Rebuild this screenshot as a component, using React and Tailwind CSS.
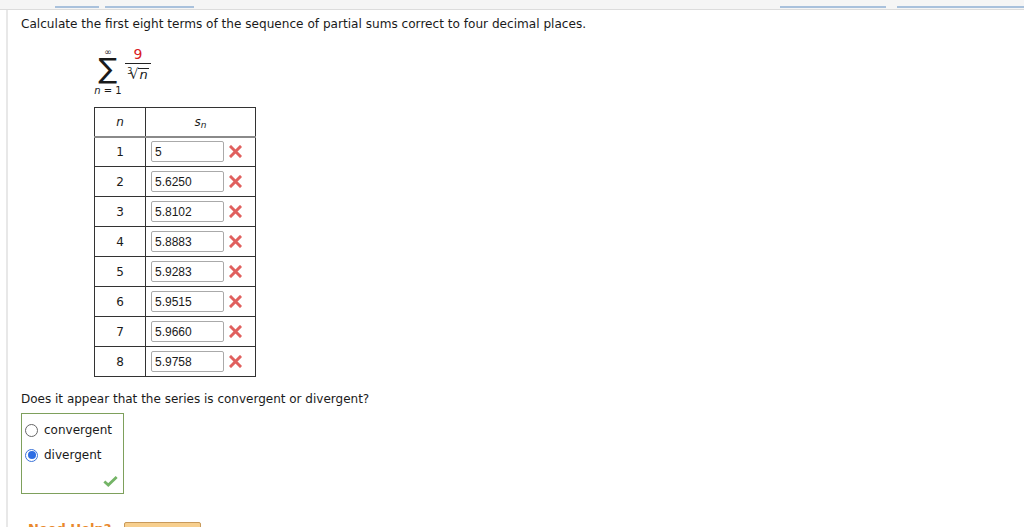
const rows = [
  [1, "5"],
  [2, "5.6250"],
  [3, "5.8102"],
  [4, "5.8883"],
  [5, "5.9283"],
  [6, "5.9515"],
  [7, "5.9660"],
  [8, "5.9758"],
];

const XMark = () => (
  <svg width="13" height="13" viewBox="0 0 13 13" className="shrink-0">
    <path d="M2 2 L11 11 M11 2 L2 11" stroke="#e0605e" strokeWidth="3" strokeLinecap="square" />
  </svg>
);

const Check = () => (
  <svg width="15" height="12" viewBox="0 0 17 13">
    <path d="M1.5 7 L6 11 L15.5 2" stroke="#74b466" strokeWidth="3.2" fill="none" strokeLinejoin="miter" />
  </svg>
);

export default function App() {
  return (
    <div className="w-[1024px] h-[527px] overflow-hidden bg-white text-[12px] text-[#1a1a1a]" style={{ fontFamily: '"DejaVu Sans", Verdana, sans-serif' }}>
      {/* top strip */}
      <div className="h-[10px] bg-[#f5f5f5] border-b border-[#dcdcdc] relative">
        <div className="absolute left-[55px] bottom-[1px] w-[44px] h-[2px] bg-[#a9c1dc]" />
        <div className="absolute left-[105px] bottom-[1px] w-[89px] h-[2px] bg-[#a9c1dc]" />
        <div className="absolute left-[780px] bottom-[1px] w-[106px] h-[2px] bg-[#a9c1dc]" />
        <div className="absolute left-[897px] bottom-[1px] w-[127px] h-[2px] bg-[#a9c1dc]" />
      </div>

      <div className="flex">
        <div className="w-[2px] ml-[6px] bg-[#e8e8e8] h-[517px]" />
        <div className="pl-[13px] pt-[6px]">
          <p className="leading-[16px] text-[12.1px]">Calculate the first eight terms of the sequence of partial sums correct to four decimal places.</p>

          {/* formula */}
          <div className="ml-[72px] mt-[8px] flex items-start h-[62px]">
            <div className="flex flex-col items-center w-[30px]">
              <span className="text-[9px] leading-[8px] mt-[8px]">∞</span>
              <span className="text-[28px] leading-[26px]">∑</span>
              <span className="text-[10px] leading-[12px] mt-[3px] italic whitespace-nowrap">n <span className="not-italic">= 1</span></span>
            </div>
            <div className="flex flex-col items-center ml-[2px] mt-[7px]">
              <span className="text-[#d9201f] text-[14px] leading-[15px]">9</span>
              <div className="w-[26px] h-[1px] bg-[#222] mt-[1px]" />
              <span className="flex items-start leading-[14px] mt-[4px]">
                <span className="text-[8px] leading-[8px]">3</span>
                <span className="text-[14px] leading-[13px] -ml-[3px]">√</span>
                <span className="italic border-t border-[#222] text-[13px] leading-[12px] px-[1px]">n</span>
              </span>
            </div>
          </div>

          {/* table */}
          <table className="ml-[73px] mt-[5px] border-collapse border border-[#333]">
            <thead>
              <tr className="h-[29px] border-b-2 border-[#8a8a8a]">
                <th className="w-[51px] border-r border-[#333] font-normal italic text-[12px]">n</th>
                <th className="w-[110px] font-normal italic text-[12px]">
                  s<sub className="text-[9px]">n</sub>
                </th>
              </tr>
            </thead>
            <tbody>
              {rows.map(([n, v]) => (
                <tr key={n} className="h-[30px] border-t border-[#333]">
                  <td className="border-r border-[#333] text-center text-[12px]">{n}</td>
                  <td>
                    <div className="flex items-center gap-[5px] pl-[5px]">
                      <div className="w-[73px] h-[21px] border border-[#aaa] rounded-[2px] px-[3px] flex items-center text-[12px]" style={{ fontFamily: '"Liberation Sans", Arial, sans-serif' }}>{v}</div>
                      <XMark />
                    </div>
                  </td>
                </tr>
              ))}
            </tbody>
          </table>

          <p className="mt-[14px] leading-[16px]">Does it appear that the series is convergent or divergent?</p>

          <div className="mt-[6px] w-[103px] h-[81px] border border-[#7ea05c] pt-[8px] pl-[3px] relative">
            <label className="flex items-center gap-[6px] h-[16px]">
              <span className="w-[13px] h-[13px] rounded-full border border-[#666] bg-white" />
              <span>convergent</span>
            </label>
            <label className="flex items-center gap-[6px] h-[16px] mt-[9px]">
              <span className="w-[13px] h-[13px] rounded-full border border-[#3b73d8] bg-white flex items-center justify-center">
                <span className="w-[8px] h-[8px] rounded-full bg-[#2e6de3]" />
              </span>
              <span>divergent</span>
            </label>
            <div className="absolute right-[5px] bottom-[6px]"><Check /></div>
          </div>

          <div className="mt-[28px] flex items-start gap-[13px]">
            <span className="text-[#e9882c] font-bold text-[13px] leading-[14px] pl-[7px]">Need Help?</span>
            <div className="w-[77px] h-[20px] bg-[#f7cf8e] border border-[#c99a5a] rounded-[2px]" />
          </div>
        </div>
      </div>
    </div>
  );
}
